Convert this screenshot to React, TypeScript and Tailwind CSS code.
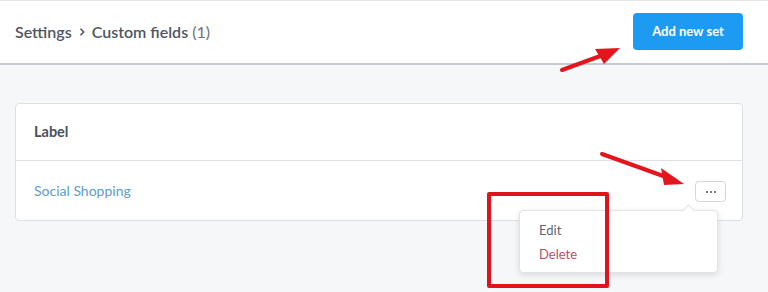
import React from "react";

export default function App() {
  return (
    <div
      className="relative w-[768px] h-[292px] overflow-hidden bg-[#f6f7f9]"
      style={{ fontFamily: "Lato, 'Noto Sans', sans-serif" }}
    >
      <div className="border-t border-[#e3e5e9]" />
      <header className="h-[64px] bg-white border-b-2 border-[#c6cad1] flex items-center justify-between pl-[15px] pr-[25px]">
        <div className="flex items-center text-[16px] text-[#4f5663]">
          <span className="font-semibold">Settings</span>
          <svg width="12" height="14" viewBox="0 0 12 14" className="mx-[4px]">
            <path d="M4.5 3.8 L7.7 7 L4.5 10.2" fill="none" stroke="#4f5663" strokeWidth="1.6" />
          </svg>
          <span className="font-semibold">Custom fields</span>
          <span className="ml-[4px] text-[#6a707c]">(1)</span>
        </div>
        <button className="w-[110px] h-[37px] mb-[1px] rounded bg-[#1d9bf2] text-white text-[13px] font-bold">
          Add new set
        </button>
      </header>
      <main className="pt-[38px] px-[15px]">
        <div className="w-[728px] bg-white border border-[#dde0e5] rounded">
          <div className="h-[57px] border-b border-[#dde0e5] flex items-center px-[18px]">
            <span className="text-[14.5px] font-bold text-[#4a5160]">Label</span>
          </div>
          <div className="h-[59px] flex items-center justify-between pl-[18px] pr-[16px]">
            <span className="text-[14px] text-[#5b9ccb]">Social Shopping</span>
            <button className="w-[31px] h-[21px] mt-[2px] border border-[#d3d6db] rounded bg-white flex items-center justify-center gap-[2px]">
              <span className="w-[2px] h-[2px] rounded-full bg-[#4a5160]" />
              <span className="w-[2px] h-[2px] rounded-full bg-[#4a5160]" />
              <span className="w-[2px] h-[2px] rounded-full bg-[#4a5160]" />
            </button>
          </div>
        </div>
      </main>

      {/* dropdown menu */}
      <div className="absolute left-[519px] top-[210px] w-[199px] h-[63px] bg-white rounded border border-[#e1e3e7] shadow-[0_2px_6px_rgba(0,0,0,0.12)] flex flex-col justify-center pl-[19px] gap-[6px] text-[13px]">
        <span className="text-[#5f6673] leading-[18px]">Edit</span>
        <span className="text-[#b9506a] leading-[18px]">Delete</span>
        <div className="absolute -top-[5px] left-[164px] w-[9px] h-[9px] bg-white border-l border-t border-[#e1e3e7] rotate-45" />
      </div>

      {/* annotation overlay */}
      <div className="absolute left-[487px] top-[192px] w-[122px] h-[96px] border-[4px] border-[#e0121b] rounded-[2px]" />
      <svg className="absolute left-0 top-0" width="768" height="292" viewBox="0 0 768 292">
        <line x1="562" y1="70" x2="603" y2="55" stroke="#e3151d" strokeWidth="4" strokeLinecap="round" />
        <polygon points="620,48 595,49 604,64" fill="#e3151d" />
        <line x1="602" y1="154" x2="666" y2="177" stroke="#e3151d" strokeWidth="4" strokeLinecap="round" />
        <polygon points="684,184 661,168 664,185" fill="#e3151d" />
      </svg>
    </div>
  );
}
